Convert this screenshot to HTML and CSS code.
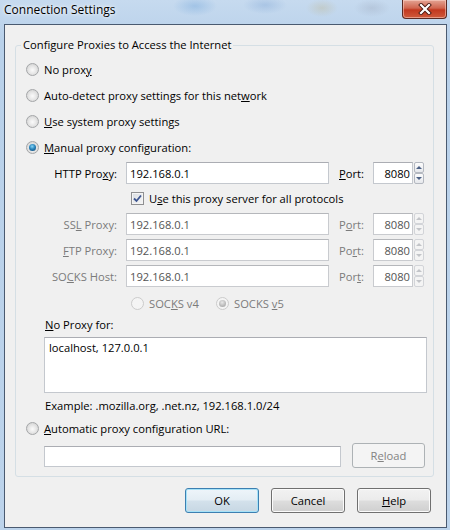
FILE: index.html
```html
<!DOCTYPE html>
<html lang="en">
<head>
  <meta charset="UTF-8">
  <meta name="viewport" content="width=device-width, initial-scale=1">
  <title>Connection Settings</title>
  <link rel="stylesheet" href="styles.css">
</head>
<body>
  <div class="window">
    <div class="titlebar">
      <span class="title">Connection Settings</span>
      <span class="close">
        <svg width="14" height="12" viewBox="0 0 14 12">
          <path d="M3 2 L11 10 M11 2 L3 10" stroke="#4a1a12" stroke-width="4" stroke-linecap="square"/>
          <path d="M3 2 L11 10 M11 2 L3 10" stroke="#fff" stroke-width="2.2" stroke-linecap="square"/>
        </svg>
      </span>
    </div>

    <div class="client">
      <fieldset class="group">
        <legend>Configure Proxies to Access the Internet</legend>

        <!-- Proxy mode -->
        <div class="option"><span class="radio"></span><span>No prox<u>y</u></span></div>
        <div class="option"><span class="radio"></span><span>Auto-detect proxy settings for this net<u>w</u>ork</span></div>
        <div class="option"><span class="radio"></span><span><u>U</u>se system proxy settings</span></div>
        <div class="option"><span class="radio checked"></span><span><u>M</u>anual proxy configuration:</span></div>

        <!-- Manual proxies -->
        <div class="proxy-row">
          <label class="proxy-label">HTTP Pro<u>x</u>y:</label>
          <input class="host" type="text" value="192.168.0.1">
          <label class="port-label"><u>P</u>ort:</label>
          <span class="port">
            <input type="text" value="8080">
            <span class="spin"><span class="up"></span><span class="down"></span></span>
          </span>
        </div>
        <div class="check-row">
          <span class="checkbox">
            <svg width="11" height="11" viewBox="0 0 11 11"><path d="M2 5.5 L4.5 8 L9 2.5" fill="none" stroke="#3d5590" stroke-width="1.8"/></svg>
          </span>
          <span>U<u>s</u>e this proxy server for all protocols</span>
        </div>

        <div class="proxy-row disabled">
          <label class="proxy-label">SS<u>L</u> Proxy:</label>
          <input class="host" type="text" value="192.168.0.1" disabled>
          <label class="port-label">P<u>o</u>rt:</label>
          <span class="port">
            <input type="text" value="8080" disabled>
            <span class="spin"><span class="up"></span><span class="down"></span></span>
          </span>
        </div>
        <div class="proxy-row disabled">
          <label class="proxy-label"><u>F</u>TP Proxy:</label>
          <input class="host" type="text" value="192.168.0.1" disabled>
          <label class="port-label">Po<u>r</u>t:</label>
          <span class="port">
            <input type="text" value="8080" disabled>
            <span class="spin"><span class="up"></span><span class="down"></span></span>
          </span>
        </div>
        <div class="proxy-row disabled">
          <label class="proxy-label">SO<u>C</u>KS Host:</label>
          <input class="host" type="text" value="192.168.0.1" disabled>
          <label class="port-label">Por<u>t</u>:</label>
          <span class="port">
            <input type="text" value="8080" disabled>
            <span class="spin"><span class="up"></span><span class="down"></span></span>
          </span>
        </div>

        <div class="socks-row disabled">
          <span class="radio"></span><span class="socks-v4">SOC<u>K</u>S v4</span>
          <span class="radio checked"></span><span>SOCKS <u>v</u>5</span>
        </div>

        <!-- Exceptions -->
        <div class="no-proxy"><u>N</u>o Proxy for:</div>
        <textarea class="exceptions">localhost, 127.0.0.1</textarea>
        <div class="example">Example: .mozilla.org, .net.nz, 192.168.1.0/24</div>

        <!-- PAC file -->
        <div class="option auto"><span class="radio"></span><span><u>A</u>utomatic proxy configuration URL:</span></div>
        <div class="url-row">
          <input class="url" type="text" value="">
          <button class="btn reload" disabled>R<u>e</u>load</button>
        </div>
      </fieldset>

      <div class="actions">
        <button class="btn default">OK</button>
        <button class="btn">Cancel</button>
        <button class="btn"><u>H</u>elp</button>
      </div>
    </div>
  </div>
</body>
</html>
```

FILE: styles.css
```css
body {
  margin: 0;
  font-family: "Open Sans", "Noto Sans", sans-serif;
  font-size: 11.2px;
  color: #000;
}
.window {
  width: 450px;
  height: 530px;
  display: flex;
  flex-direction: column;
  background:
    radial-gradient(ellipse 22px 10px at 195px 6px, rgba(120,170,220,0.45), transparent),
    radial-gradient(ellipse 22px 9px at 265px 5px, rgba(120,160,210,0.35), transparent),
    radial-gradient(ellipse 16px 9px at 322px 8px, rgba(190,180,140,0.35), transparent),
    radial-gradient(ellipse 18px 9px at 372px 8px, rgba(150,160,180,0.3), transparent),
    linear-gradient(#c6daef, #b9d1ea 40px, #bcd3eb);
}
.titlebar {
  height: 24px;
  display: flex;
  align-items: flex-start;
  padding-left: 4px;
}
.title {
  font-size: 12px;
  line-height: 20px;
  text-shadow: 0 0 6px rgba(255,255,255,0.9), 0 0 3px rgba(255,255,255,0.9);
}
.close {
  margin-left: auto;
  margin-right: 3px;
  width: 45px;
  height: 19px;
  box-sizing: border-box;
  display: flex;
  align-items: center;
  justify-content: center;
  border: 1px solid #5a2a24;
  border-top: none;
  border-radius: 0 0 4px 4px;
  background: linear-gradient(#e4a494, #d0654f 45%, #c2381f 55%, #cf5a3c);
  box-shadow: inset 0 0 0 1px rgba(255,220,210,0.5);
}
.client {
  flex: 1;
  margin: 0 3px 2px 4px;
  padding: 12px 12px 0 10px;
  border: 1px solid #4a5a70;
  background: #f0f0f0;
}

/* group box */
.group {
  margin: 0;
  padding: 3px 0 8px;
  min-width: 0;
  border: 1px solid #d5dfe5;
  border-radius: 3px;
}
.group legend {
  margin-left: 5px;
  padding: 0 2px;
  line-height: 16px;
}
.option {
  height: 26px;
  display: flex;
  align-items: center;
  gap: 5px;
  padding-left: 10px;
}
.option.auto {
  height: 22px;
}

/* radios and checkbox */
.radio {
  width: 13px;
  height: 13px;
  box-sizing: border-box;
  flex: none;
  display: flex;
  align-items: center;
  justify-content: center;
  border: 1px solid #a4a6a8;
  border-radius: 50%;
  background: radial-gradient(circle at 50% 55%, #fbfbfb 0, #e9e9e9 40%, #cacaca 100%);
}
.radio.checked::after {
  content: "";
  width: 7px;
  height: 7px;
  border-radius: 50%;
  background: radial-gradient(circle at 45% 35%, #8ad6f6 0, #2a86bd 45%, #0c3c68 100%);
}
.disabled .radio {
  border-color: #cbcbcb;
  background: #f4f4f4;
}
.disabled .radio.checked::after {
  background: radial-gradient(circle at 45% 35%, #e8e8e8 0, #b8b8b8 60%, #a0a0a0 100%);
}
.checkbox {
  width: 13px;
  height: 13px;
  box-sizing: border-box;
  flex: none;
  display: flex;
  align-items: center;
  justify-content: center;
  border: 1px solid #8f9092;
  background: linear-gradient(135deg, #d9dde2, #f6f6f6);
  box-shadow: inset 0 0 0 1px #f4f4f4;
}
.check-row {
  height: 25px;
  display: flex;
  align-items: center;
  gap: 5px;
  padding-left: 115px;
}

/* proxy host rows */
.proxy-row {
  height: 26px;
  display: flex;
  align-items: center;
  padding-left: 28px;
}
.proxy-label {
  width: 73px;
  margin-right: 9px;
  text-align: right;
}
.port-label {
  width: 34px;
  margin-left: 10px;
}
.disabled {
  color: #7b7b7b;
}
input, textarea {
  box-sizing: border-box;
  font: inherit;
  color: #000;
  background: #fff;
  border: 1px solid #c4c8ce;
  border-top-color: #abadb3;
  border-radius: 0;
  outline: none;
  margin: 0;
}
input {
  height: 22px;
  padding: 0 3px;
}
input:disabled {
  color: #545454;
  background: #fff;
  border-color: #c9cbcf;
  border-top-color: #b5b7bb;
}
.host {
  width: 203px;
}
.port {
  display: flex;
  gap: 1px;
}
.port input {
  width: 40px;
  padding: 0 2px 0 0;
  text-align: right;
}
.spin {
  width: 10px;
  height: 22px;
  display: flex;
  flex-direction: column;
}
.spin span {
  flex: 1;
  display: flex;
  align-items: center;
  justify-content: center;
  border: 1px solid #b4b8c0;
  border-radius: 2px;
  background: linear-gradient(#fdfdfd, #e6e8ec);
}
.spin .up::after {
  content: "";
  border-left: 3px solid transparent;
  border-right: 3px solid transparent;
  border-bottom: 3px solid #4d6185;
}
.spin .down::after {
  content: "";
  border-left: 3px solid transparent;
  border-right: 3px solid transparent;
  border-top: 3px solid #4d6185;
}
.disabled .spin span {
  border-color: #d2d4d8;
  background: #f4f4f4;
}
.disabled .spin .up::after {
  border-bottom-color: #c2c4c8;
}
.disabled .spin .down::after {
  border-top-color: #c2c4c8;
}

.socks-row {
  height: 28px;
  display: flex;
  align-items: center;
  gap: 5px;
  padding-left: 115px;
}
.socks-v4 {
  width: 62px;
}

/* exceptions */
.no-proxy {
  line-height: 16px;
  padding-left: 29px;
}
.exceptions {
  display: block;
  width: 383px;
  height: 56px;
  margin: 4px 0 0 28px;
  padding: 2px 4px;
  line-height: 16px;
  resize: none;
  overflow: hidden;
}
.example {
  height: 24px;
  display: flex;
  align-items: center;
  padding-left: 29px;
}

.url-row {
  height: 29px;
  display: flex;
  align-items: flex-end;
  padding-left: 28px;
}
.url {
  width: 297px;
  height: 21px;
  margin-bottom: 1px;
}

/* push buttons */
.btn {
  width: 74px;
  height: 25px;
  padding: 0;
  font: inherit;
  color: #000;
  border: 1px solid #707070;
  border-radius: 3px;
  background: linear-gradient(#f2f2f2 0%, #ebebeb 48%, #dddddd 52%, #cfcfcf 100%);
  box-shadow: inset 0 0 0 1px #fbfbfb;
}
.btn.default {
  border-color: #3c7fb1;
  background: linear-gradient(#eef5fa 0%, #e3edf4 48%, #d3e1eb 52%, #c7d7e3 100%);
  box-shadow: inset 0 0 0 1px #a6e2f8;
}
.reload {
  width: 73px;
  margin-left: 11px;
  color: #838383;
  border-color: #adb2b5;
  background: #f4f4f4;
  box-shadow: none;
}
.actions {
  display: flex;
  justify-content: flex-end;
  gap: 12px;
  margin-top: 11px;
  padding-right: 3px;
}
```
